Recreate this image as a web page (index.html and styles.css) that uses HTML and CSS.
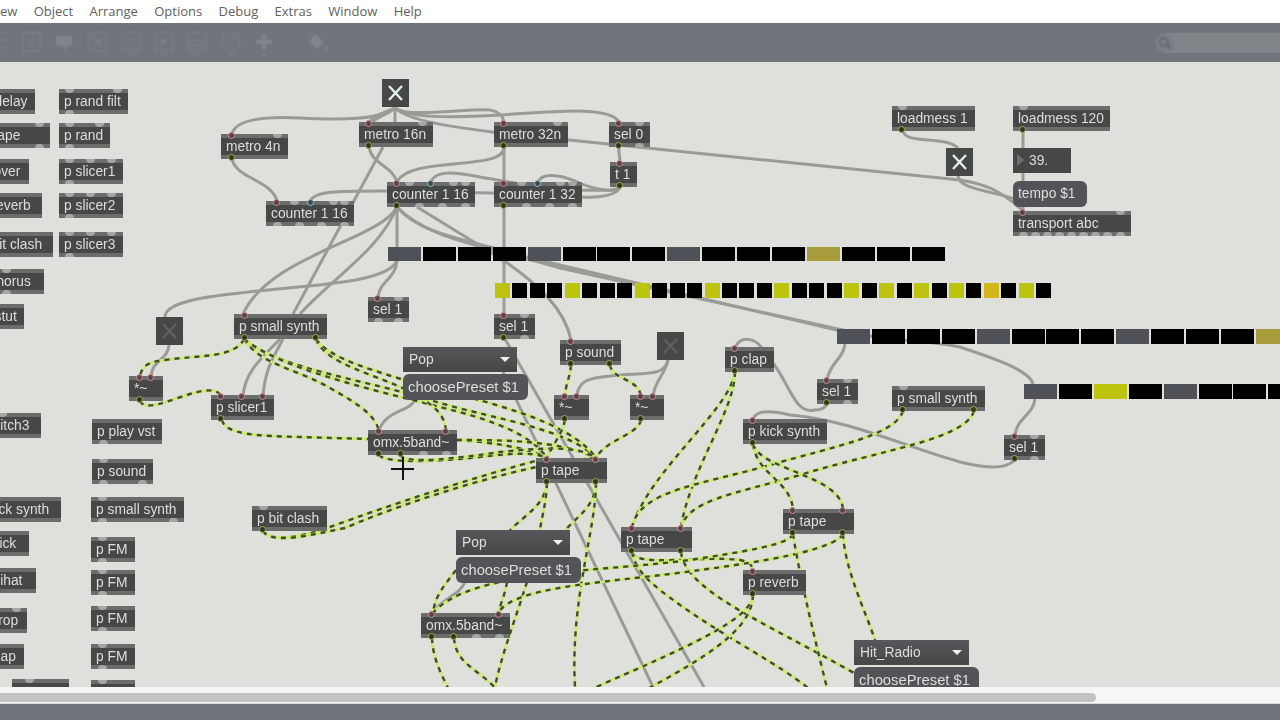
FILE: index.html
```html
<!DOCTYPE html>
<html lang="en">
<head>
    <meta charset="UTF-8">
    <title>Max patcher</title>
    <link rel="stylesheet" href="styles.css">
</head>
<body>
    <div class="menubar">
        <span>View</span><span>Object</span><span>Arrange</span><span>Options</span><span>Debug</span><span>Extras</span><span>Window</span><span>Help</span>
    </div>

    <div class="toolbar">
        <svg class="tool-icons" width="340" height="30" viewBox="0 0 340 30">
            <g fill="none" stroke="#7f8289" stroke-width="1.2">
                <path d="M-2 5h9M-2 12h9M-2 19h9M-2 26h9"/>
                <rect x="23" y="5" width="17" height="18"/>
                <path d="M29 12h5v5h-5z"/>
                <rect x="89" y="5" width="17" height="18"/>
                <path d="M93 9l9 10M102 9l-9 10"/>
                <rect x="122" y="5" width="18" height="18"/>
                <circle cx="131" cy="14" r="4"/>
                <rect x="155" y="5" width="18" height="18"/>
                <rect x="188" y="5" width="18" height="18"/>
                <path d="M188 13h18M188 17h18"/>
                <circle cx="231" cy="14" r="9"/>
                <path d="M231 14l5-6"/>
            </g>
            <path d="M56 8h16v10h-5l-2 5-2-5h-7z" fill="#82858b"/>
            <path d="M161 10l6 4-6 4z" fill="#7f8289"/>
            <path d="M262 6h4v6h6v4h-6v6h-4v-6h-6v-4h6z" fill="#82858b"/>
            <path d="M315 6l9 8-7 7-8-7zM326 17l2 3-2 2-2-2z" fill="#82858b"/>
            <path d="M131 28l-3-2h6zM164 28l-3-2h6zM197 28l-3-2h6zM231 28l-3-2h6zM264 28l-3-2h6z" fill="#7f8289"/>
        </svg>
        <div class="search">
            <svg width="22" height="22" viewBox="0 0 22 22">
                <circle cx="11" cy="11" r="10" fill="#7c7f86"/>
                <circle cx="10" cy="10" r="4" fill="none" stroke="#63666d" stroke-width="2"/>
                <path d="M13 13l4 4" stroke="#63666d" stroke-width="2"/>
            </svg>
        </div>
    </div>

    <div class="patch" id="patch">
        <svg class="wires" id="wires" viewBox="0 62 1280 625"></svg>
    </div>

    <div class="scrollbar"><div class="thumb"></div></div>
    <div class="statusbar"></div>

    <div class="cursor"></div>

    <script src="app.js"></script>
</body>
</html>
```

FILE: styles.css
```css
* {
    box-sizing: border-box;
    margin: 0;
    padding: 0;
}

body {
    width: 1280px;
    height: 720px;
    overflow: hidden;
    display: flex;
    flex-direction: column;
    font-family: "Liberation Sans", Arial, sans-serif;
    background: #dfe0db;
    position: relative;
}

.menubar {
    height: 23px;
    flex: none;
    background: #fff;
    display: flex;
    align-items: center;
    gap: 16.3px;
    margin-left: -11px;
    padding-bottom: 2px;
    font-family: "Open Sans", sans-serif;
    font-size: 13px;
    color: #606060;
}

.toolbar {
    height: 39px;
    flex: none;
    background: #71747d;
    display: flex;
    align-items: center;
    justify-content: space-between;
}

.tool-icons {
    filter: blur(0.8px);
}

.search {
    width: 115px;
    height: 20px;
    background: #80858a;
    display: flex;
    align-items: center;
}

.search svg {
    margin-left: -11px;
    filter: blur(0.8px);
}

.patch {
    height: 625px;
    flex: none;
    position: relative;
    overflow: hidden;
    background: #dfe0db;
}

.wires,
.box,
.toggle,
.cell {
    filter: blur(0.5px);
}

.wires {
    position: absolute;
    left: 0;
    top: 0;
    width: 1280px;
    height: 625px;
}

.cord {
    fill: none;
    stroke: #9a9b97;
    stroke-width: 3;
}

.signal {
    fill: none;
    stroke: #cdea78;
    stroke-width: 3;
}

.signal-dash {
    fill: none;
    stroke: #414c30;
    stroke-width: 2.4;
    stroke-dasharray: 5 5;
}

.box {
    position: absolute;
    height: 25px;
    padding-left: 5px;
    line-height: 26px;
    font-size: 13.8px;
    white-space: nowrap;
    color: #dcdedc;
    background: linear-gradient(#6b6c6c 0 4px, #464847 4px 21px, #6b6c6c 21px);
}

.box.message {
    height: 26px;
    line-height: 25px;
    border-radius: 6px;
    background: #525457;
}

.box.preset {
    font-size: 14.8px;
    line-height: 26px;
}

.box.menu {
    padding-left: 6px;
    background: linear-gradient(#55575a, #454746);
}

.box.menu::after {
    content: "";
    position: absolute;
    right: 7px;
    top: 10px;
    border-left: 5px solid transparent;
    border-right: 5px solid transparent;
    border-top: 5px solid #eef0ee;
}

.box.number {
    padding-left: 16px;
    background: #464847;
}

.box.number::before {
    content: "";
    position: absolute;
    left: 4px;
    top: 6px;
    border-top: 6px solid transparent;
    border-bottom: 6px solid transparent;
    border-left: 7px solid #6d7072;
}

.toggle {
    position: absolute;
    width: 27px;
    height: 28px;
    background: #464847;
}

.toggle svg {
    display: block;
}

.toggle .x-mark {
    stroke: #e3efeb;
}

.toggle.off .x-mark {
    stroke: #5c6160;
}

.port {
    position: absolute;
    width: 7px;
    height: 7px;
    border-radius: 50%;
}

.port.top {
    top: -2px;
}

.port.bottom {
    bottom: -2px;
}

.port.free {
    width: 9px;
    height: 4px;
    background: #a5a7a7;
}

.port.free.top {
    top: 0;
    border-radius: 0 0 5px 5px;
}

.port.free.bottom {
    bottom: 0;
    border-radius: 5px 5px 0 0;
}

.port.in {
    background: #5a4347;
    border: 1px solid #cf8f95;
}

.port.out {
    background: #2f3420;
    border: 1px solid #9fb24f;
}

.port.hot {
    background: #3c4a4e;
    border: 1px solid #8fc3d3;
}

.cell {
    position: absolute;
    background: #000;
}

.cell.step {
    background: #4f5159;
}

.cell.olive {
    background: #a89c3c;
}

.cell.lit {
    background: #bcc410;
}

.cell.gold {
    background: #d0b81c;
}

.scrollbar {
    height: 17px;
    flex: none;
    background: #f6f6f6;
    padding-top: 6px;
    border-bottom: 1px solid #dcdcdf;
}

.thumb {
    width: 1096px;
    height: 9px;
    background: #c2c2c2;
    border-radius: 0 5px 5px 0;
}

.statusbar {
    flex: 1;
    background: #71747d;
}

.cursor {
    position: absolute;
    left: 391px;
    top: 457px;
    width: 23px;
    height: 23px;
}

.cursor::before,
.cursor::after {
    content: "";
    position: absolute;
    background: #111;
}

.cursor::before {
    left: 11px;
    top: 0;
    width: 2px;
    height: 23px;
}

.cursor::after {
    left: 0;
    top: 11px;
    width: 23px;
    height: 2px;
}
```

FILE: app.js
```javascript
// Objects of the patch: text, x, y, width, ports (offsets from the left edge)
// i = connected inlet, c = blue inlet, o = connected outlet, fi/fo = free inlet/outlet
const boxes = [
    ['p delay', -22, 89, 57, {}],
    ['p rand filt', 59, 89, 69, { fi: [10, 58], fo: [10] }],
    ['p tape', -23, 123, 73, { fi: [62], fo: [62] }],
    ['p rand', 59, 123, 51, { fi: [10, 40], fo: [10] }],
    ['p over', -23, 159, 52, {}],
    ['p slicer1', 59, 159, 64, { fi: [10, 31, 52], fo: [10] }],
    ['p reverb', -25, 193, 67, {}],
    ['p slicer2', 59, 193, 64, { fi: [10, 31, 52], fo: [10] }],
    ['p bit clash', -25, 232, 78, {}],
    ['p slicer3', 59, 232, 64, { fi: [10, 31, 52], fo: [10] }],
    ['p chorus', -27, 269, 71, { fi: [33], fo: [33] }],
    ['p stut', -22, 304, 46, { fi: [13] }],
    ['p glitch3', -27, 413, 68, { fi: [29] }],
    ['p play vst', 92, 419, 70, { fo: [11] }],
    ['p sound', 92, 459, 61, { fi: [11], fo: [11, 50] }],
    ['p kick synth', -28, 497, 89, {}],
    ['p small synth', 91, 497, 93, { fi: [11], fo: [11, 82] }],
    ['p kick', -24, 531, 53, {}],
    ['p FM', 91, 537, 44, { fi: [11], fo: [11] }],
    ['p hihat', -24, 568, 60, {}],
    ['p FM', 91, 570, 44, { fi: [11], fo: [11] }],
    ['p drop', -26, 608, 53, { fi: [42] }],
    ['p FM', 91, 606, 44, { fi: [11], fo: [11] }],
    ['p clap', -26, 644, 50, {}],
    ['p FM', 91, 644, 44, { fi: [11], fo: [11] }],
    ['', 12, 679, 57, { fi: [17] }],
    ['p FM', 91, 680, 44, { fi: [11] }],

    ['metro 4n', 221, 134, 67, { i: [11], fi: [56], o: [11] }],
    ['metro 16n', 359, 122, 74, { i: [10], fi: [63], o: [10] }],
    ['metro 32n', 494, 122, 74, { i: [10], fi: [63], o: [10] }],
    ['sel 0', 609, 122, 41, { i: [10], fi: [30], o: [10], fo: [30] }],
    ['t 1', 610, 162, 27, { i: [10], o: [10] }],
    ['counter 1 16', 387, 182, 88, { i: [10], c: [44], fi: [22, 66, 78], o: [10], fo: [32, 55, 78] }],
    ['counter 1 32', 494, 182, 88, { i: [10], c: [44], fi: [27, 66, 78], o: [10], fo: [32, 55, 78] }],
    ['counter 1 16', 266, 201, 88, { i: [11], c: [45], fi: [28, 67, 78], fo: [11, 33, 55, 78] }],
    ['sel 1', 368, 297, 41, { i: [10], fi: [30], fo: [10, 30] }],
    ['p small synth', 234, 314, 93, { i: [11], o: [11, 82] }],
    ['sel 1', 494, 314, 41, { i: [10], fi: [30], o: [10], fo: [30] }],
    ['*~', 129, 376, 34, { i: [11, 22], o: [11] }],
    ['p slicer1', 211, 395, 63, { i: [10, 31, 52], o: [10] }],
    ['omx.5band~', 368, 430, 89, { i: [11, 78], o: [11, 33], fo: [55, 78] }],
    ['p sound', 560, 340, 61, { i: [11], o: [11, 50] }],
    ['*~', 554, 395, 35, { i: [11, 23], o: [11] }],
    ['*~', 630, 395, 34, { i: [11, 23], o: [11] }],
    ['p tape', 536, 458, 71, { i: [11, 60], o: [11, 60] }],
    ['p bit clash', 252, 506, 75, { fi: [11], o: [11] }],
    ['p clap', 725, 347, 49, { i: [10], o: [10] }],
    ['sel 1', 817, 379, 41, { i: [10], fi: [30], o: [10], fo: [30] }],
    ['p small synth', 892, 386, 93, { fi: [11], o: [11, 82] }],
    ['p kick synth', 743, 419, 84, { i: [10], o: [10] }],
    ['sel 1', 1004, 435, 41, { i: [11], fi: [30], o: [11], fo: [30] }],
    ['p tape', 621, 527, 71, { i: [11, 60], o: [11, 60] }],
    ['p tape', 783, 509, 71, { i: [10, 60], o: [10, 60] }],
    ['p reverb', 743, 570, 63, { i: [10], o: [10] }],
    ['omx.5band~', 421, 613, 89, { i: [11, 78], o: [11, 33], fo: [55, 78] }],
    ['loadmess 1', 892, 106, 83, { fi: [10], o: [10] }],
    ['loadmess 120', 1013, 106, 97, { fi: [10], o: [10] }],
    ['transport abc', 1013, 211, 118, { i: [10], fi: [107], fo: [10, 22, 34, 46, 58, 70, 82, 94, 107] }]
];

const messages = [
    ['tempo $1', 1013, 181, 74, ''],
    ['choosePreset $1', 403, 374, 125, 'preset'],
    ['choosePreset $1', 456, 557, 125, 'preset'],
    ['choosePreset $1', 854, 667, 125, 'preset']
];

const menus = [
    ['Pop', 403, 347, 114],
    ['Pop', 456, 530, 114],
    ['Hit_Radio', 854, 640, 115]
];

const toggles = [
    [382, 79, true],
    [946, 148, true],
    [156, 317, false],
    [657, 332, false]
];

// Grey control cords
const cords = [
    'M395 108C385 112 375 115 369 122',
    'M395 108C390 113 380 116 372 122',
    'M395 108V122',
    'M395 108C380 120 340 120 300 118C260 116 235 120 232 134',
    'M395 108C405 118 470 108 490 110C500 112 503 116 504 122',
    'M395 108C410 118 450 118 500 115C550 112 610 105 619 122',
    'M395 108C410 122 460 128 500 133L960 180C985 184 1000 190 1022 210',
    'M369 147C372 165 392 165 397 182',
    'M383 147L293 314',
    'M232 158C234 178 272 180 277 201',
    'M504 147C505 172 410 155 397 182',
    'M504 147V314',
    'M619 147C618 152 620 156 620 162',
    'M431 182C435 170 455 172 480 177C520 184 560 192 590 190C605 190 616 192 620 187',
    'M538 182C542 172 560 175 575 181C590 188 612 194 620 187',
    'M582 197C600 198 618 195 620 187',
    'M310 201C315 190 340 191 400 191L540 194',
    'M397 207V247',
    'M397 207C380 240 270 255 243 314',
    'M397 207C380 250 330 280 300 314',
    'M397 207C420 235 470 240 530 258L845 332',
    'M397 207C430 240 480 245 560 268L870 336C900 342 930 340 960 347C990 357 1030 370 1033 384',
    'M417 207L500 258C540 285 565 310 571 340',
    'M397 261C395 280 380 280 378 297',
    'M397 261C385 285 300 285 240 293C190 298 165 305 165 317',
    'M505 339L704 687',
    'M503 372L653 687',
    'M169 345C168 360 152 360 151 376',
    'M280 339C265 355 245 370 243 396',
    'M283 339C272 360 265 370 263 396',
    'M668 360C665 378 640 372 610 376C590 378 578 380 577 396',
    'M668 360C665 375 655 380 653 396',
    'M415 400C410 412 385 410 379 431',
    'M735 348C740 335 755 338 762 348',
    'M773 363C790 385 795 415 815 410C822 410 826 408 827 403',
    'M845 344C843 360 830 362 827 380',
    'M1015 460C1005 470 985 468 960 462C900 445 850 420 790 415C770 410 756 410 753 419',
    'M1035 399C1033 415 1017 418 1015 435',
    'M903 131C906 145 945 135 958 148',
    'M958 176C960 190 990 190 1018 200',
    'M1023 131V211',
    'M465 582C460 595 440 600 431 614'
];

// Green dashed signal cords
const signals = [
    'M244 339C235 358 200 355 165 360C145 362 142 368 140 376',
    'M244 339C260 365 300 370 330 388C360 405 375 415 379 431',
    'M244 339C280 370 370 380 440 403C500 420 570 430 596 458',
    'M244 339C290 375 400 395 470 415C510 427 535 440 547 458',
    'M316 339C325 365 380 375 410 392C435 405 445 415 446 431',
    'M316 339C330 360 380 372 420 385C480 400 570 420 596 458',
    'M140 401C145 412 170 400 190 394C210 388 218 390 221 396',
    'M222 420C225 435 260 436 300 437L368 439',
    'M457 440C490 442 530 448 547 458',
    'M457 440C500 440 560 440 596 458',
    'M379 455C385 463 430 462 470 458C500 455 530 450 547 458',
    'M400 455C405 465 460 458 500 452C540 448 580 445 596 458',
    'M263 531C270 542 300 538 330 527C390 505 480 475 547 458',
    'M263 531C272 545 310 535 345 528C410 500 530 462 596 458',
    'M565 420C562 435 552 445 547 458',
    'M641 420C638 435 605 440 596 458',
    'M571 365C570 378 566 382 565 396',
    'M610 365C612 380 638 378 641 396',
    'M547 483C545 505 525 515 510 530',
    'M547 483C546 505 542 515 540 530',
    'M596 483C595 505 580 515 565 530',
    'M596 483C596 530 570 600 575 687',
    'M456 570C445 585 435 595 433 613',
    'M507 582C505 595 500 605 498 614',
    'M527 582C515 620 500 660 495 687',
    'M432 638C433 660 442 675 448 688',
    'M454 638C456 665 480 670 495 688',
    'M632 552C636 568 700 555 740 560C750 562 752 565 753 571',
    'M632 552C636 575 660 590 680 605C730 640 780 665 808 688',
    'M681 552C685 590 760 620 854 673',
    'M793 534C790 545 740 552 690 560C600 572 470 570 433 613',
    'M843 534C835 550 760 562 700 570C620 582 510 585 498 614',
    'M793 534C797 560 805 600 827 688',
    'M843 534C845 570 865 610 875 640',
    'M753 595C752 620 680 650 594 688',
    'M753 595C752 625 720 650 649 688',
    'M735 372C730 410 650 470 632 527',
    'M735 372C735 410 690 470 681 527',
    'M903 411C895 435 840 445 770 465C700 485 640 490 632 527',
    'M974 411C965 440 880 450 800 475C730 495 690 500 681 527',
    'M753 444C757 475 790 480 793 509',
    'M753 444C760 470 840 475 843 509'
];

// Step rows: first x, y, cell width, height, pitch, and one letter per cell
// b = black, s = step mark, o = olive, l = lit, g = gold
const rows = [
    [388, 247, 33, 14, 34.9, 'sbbbsbbbsbbbobbb'],
    [495, 283, 15, 15, 17.46, 'lbbblbbblbbblbbblbbblblblblbgblb'],
    [837, 329, 33, 15, 34.9, 'sbbbsbbbsbbbo'],
    [1024, 384, 33, 15, 34.9, 'sblbsbbb']
];

const patch = document.getElementById('patch');
const wires = document.getElementById('wires');
const TOP = 62;

function place(el, x, y, w) {
    el.style.left = x + 'px';
    el.style.top = (y - TOP) + 'px';
    if (w) el.style.width = w + 'px';
    patch.appendChild(el);
}

function addPorts(el, list, cls) {
    (list || []).forEach(px => {
        const port = document.createElement('span');
        port.className = 'port ' + cls;
        port.style.left = (px - 4) + 'px';
        el.appendChild(port);
    });
}

function addBox(kind, text, x, y, w, ports) {
    const el = document.createElement('div');
    el.className = 'box ' + kind;
    el.textContent = text;
    if (ports) {
        addPorts(el, ports.fi, 'free top');
        addPorts(el, ports.fo, 'free bottom');
        addPorts(el, ports.i, 'in top');
        addPorts(el, ports.c, 'hot top');
        addPorts(el, ports.o, 'out bottom');
    }
    place(el, x, y, w);
}

function addPath(d, cls) {
    const path = document.createElementNS('http://www.w3.org/2000/svg', 'path');
    path.setAttribute('d', d);
    path.setAttribute('class', cls);
    wires.appendChild(path);
}

cords.forEach(d => addPath(d, 'cord'));
signals.forEach(d => {
    addPath(d, 'signal');
    addPath(d, 'signal-dash');
});

boxes.forEach(([text, x, y, w, ports]) => addBox('', text, x, y, w, ports));
addBox('number', '39.', 1013, 148, 58);
messages.forEach(([text, x, y, w, extra]) => addBox('message ' + extra, text, x, y, w));
menus.forEach(([text, x, y, w]) => addBox('menu', text, x, y, w));

toggles.forEach(([x, y, on]) => {
    const el = document.createElement('div');
    el.className = on ? 'toggle' : 'toggle off';
    el.innerHTML = '<svg width="27" height="28" viewBox="0 0 27 28"><path class="x-mark" d="M7 7l13 14M20 7L7 21" fill="none" stroke-width="2.4"/></svg>';
    place(el, x, y);
});

const cellNames = { b: '', s: 'step', o: 'olive', l: 'lit', g: 'gold' };
rows.forEach(([x0, y, w, h, pitch, pattern]) => {
    pattern.split('').forEach((c, i) => {
        const cell = document.createElement('div');
        cell.className = 'cell ' + cellNames[c];
        cell.style.height = h + 'px';
        place(cell, x0 + i * pitch, y, w);
    });
});
```
